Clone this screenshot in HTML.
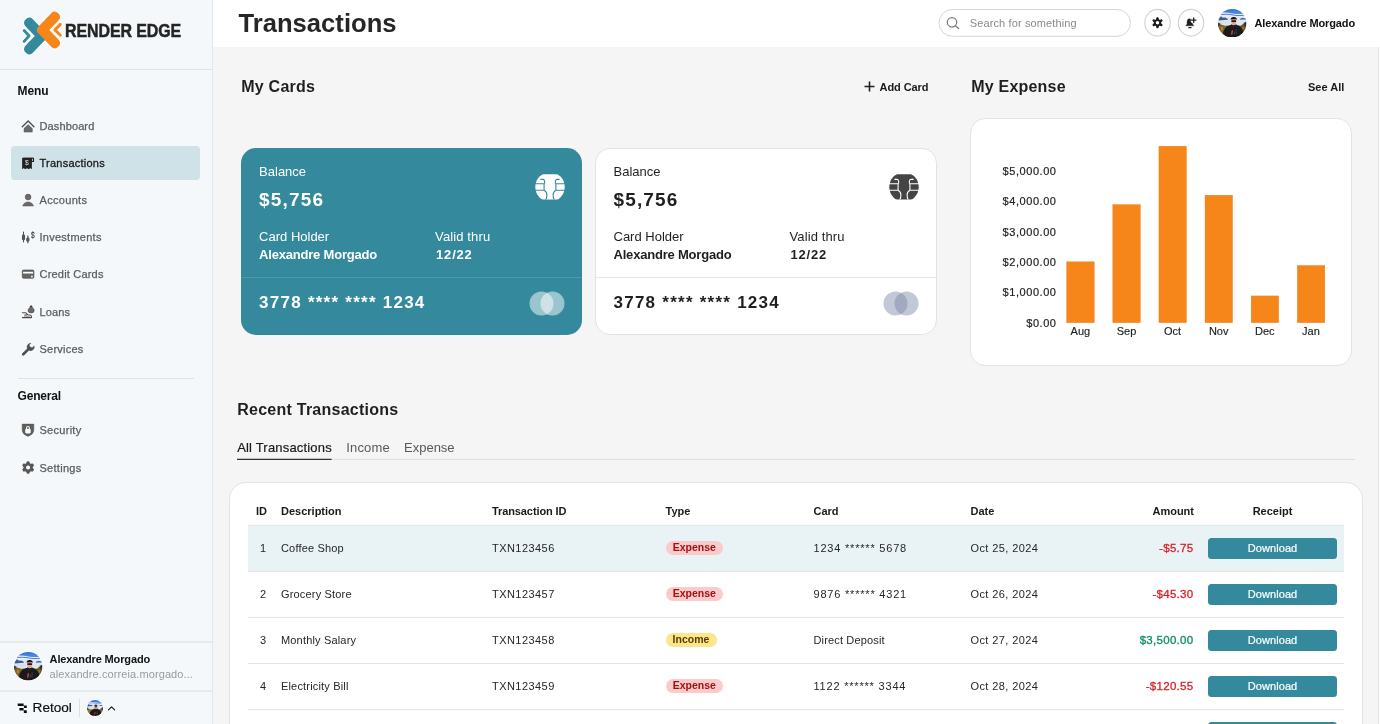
<!DOCTYPE html>
<html lang="en">
<head>
<meta charset="utf-8">
<title>Transactions</title>
<style>
*{box-sizing:border-box;margin:0;padding:0}
html,body{width:1380px;height:724px;overflow:hidden}
body{will-change:transform}
body{font-family:"Liberation Sans",sans-serif;background:#f5f5f5;color:#1f1f1f;position:relative;font-size:11px}
.abs{position:absolute}
.t{position:absolute;white-space:nowrap;line-height:1;transform-origin:0 50%}
.b{font-weight:bold}
/* sidebar */
#side{position:absolute;left:0;top:0;width:213px;height:724px;background:#f5f8fa;border-right:1px solid #e4e6e8}
.hl{position:absolute;height:1px;background:#dfe2e4}
.mi{position:absolute;left:11px;width:189px;height:34px;border-radius:4px}
.mi.sel{background:#cfe2e8}
.mi svg{position:absolute;left:10px;top:10px;width:14px;height:14px;overflow:visible;filter:drop-shadow(0 0 .7px #fff) drop-shadow(0 0 .7px #fff)}
.mi span{position:absolute;left:28.5px;top:12px;line-height:11px;font-size:11px;color:#5c5c5c;white-space:nowrap;-webkit-text-stroke:0.25px #5c5c5c;letter-spacing:0.12px}
.mi.sel span{color:#1a1a1a;-webkit-text-stroke:0.3px #1a1a1a}
/* header */
#head{position:absolute;left:213px;top:0;width:1167px;height:47px;background:#fff}
.circ{position:absolute;width:27px;height:28px;border-radius:50%;border:1px solid #d9d9d9;background:#fff}
</style>
</head>
<body>
<svg width="0" height="0" style="position:absolute">
  <defs>
    <clipPath id="avc"><circle cx="14" cy="14" r="14"/></clipPath>
    <linearGradient id="avsky" x1="0" y1="0" x2="0" y2="1"><stop offset="0" stop-color="#2f6ed8"/><stop offset="1" stop-color="#5c8fe0"/></linearGradient>
    <symbol id="avatar" viewBox="0 0 28 28">
      <g clip-path="url(#avc)">
        <rect width="28" height="28" fill="#dde8f1"/>
        <rect width="28" height="5" fill="url(#avsky)"/>
        <path d="M0 4 Q7 2.9 14 4.4 T28 4.2 V7.6 H0Z" fill="#e6edf6"/>
        <path d="M3 5.5 Q9 4.5 15 5.8 T26 5.9" stroke="#4f83dc" stroke-width="1" fill="none"/>
        <path d="M.5 10.4 L2.8 7.2 L5 8.6 L7.2 8.4 L9.8 9.8 L9.6 10.6 L.5 11.4Z" fill="#42598f"/>
        <path d="M21.6 9.6 L24.2 8.7 L27.6 9.3 V10.4 L21.6 10.5Z" fill="#5a6fa0"/>
        <path d="M0 11.4 Q6 12.4 12 11.4 L12 15 L0 15Z" fill="#cfe0ee" opacity=".6"/>
        <path d="M0 14.4 L3 15.2 L7 16.6 L10 16.2 V28 H0Z" fill="#7d6426"/>
        <path d="M28 13.8 L25 14.6 L22.4 16.6 L20 16.2 V28 H28Z" fill="#6a5628"/>
        <path d="M0 13.2 L2.6 14.6 L.6 17.6 L0 17.4Z" fill="#3c3c3c"/>
        <path d="M28 12.4 L25.2 13.8 L26.4 17.2 L28 17.8Z" fill="#333"/>
        <path d="M2.4 18.6 L4.2 16.9 L5.2 19.8 L3.8 21.8Z" fill="#a88c36"/>
        <path d="M24.4 17.6 L26 18 L25.4 20.4 L24 19.6Z" fill="#8f772f"/>
        <path d="M10.6 16.3 Q13 14.9 15.6 15.7 Q18.3 14.9 20.4 16.5 Q23.8 18.2 25 22.6 L25.8 28 H3.8 L5.4 22 Q7.2 17.6 10.6 16.3Z" fill="#1a1a1c"/>
        <path d="M13.1 10 Q13.1 8.4 15.5 8.4 Q17.9 8.4 17.9 10 V13 Q17.9 15.6 15.5 16.2 Q13.1 15.6 13.1 13Z" fill="#eea090"/>
        <path d="M12.5 10.9 Q12.3 7.9 15.5 7.9 Q18.7 7.9 18.5 10.9 L17.8 10.2 H13.2Z" fill="#121212"/>
        <rect x="13.1" y="11.1" width="4.8" height="1.6" rx=".6" fill="#1a1a1a"/>
        <path d="M13 15 L15.5 16.8 L18 15 L19 17.2 L15.5 19 L12 17.2Z" fill="#202022"/>
        <path d="M13.3 21.4 L14.6 20.4 L14.7 22.4 L14 25.6 L13 25.4Z" fill="#d4483a"/>
        <path d="M17.2 19.6 L18.5 19.6 L18.7 25 L17.3 25Z" fill="#35457a" opacity=".55"/>
        <path d="M15.7 22.2 H16.9 V25 H15.7Z" fill="#4a4a4a" opacity=".8"/>
      </g>
    </symbol>
  </defs>
</svg>

<!-- ============ SIDEBAR ============ -->
<div id="side">
  <!-- LOGO -->
  <svg class="abs" style="left:0;top:0" width="212" height="69" viewBox="0 0 212 69">
    <g stroke-linecap="round" stroke-linejoin="round">
      <path d="M29.48 21.88 L28.32 22.98 L40.70 36.00 L28.32 49.02 L29.48 50.12 L42.90 36.00 Z" fill="#fff" stroke="#fff" stroke-width="10.6"/>
      <path d="M54.62 15.88 L55.78 16.98 L43.40 30.00 L55.78 43.02 L54.62 44.12 L41.20 30.00 Z" fill="#fff" stroke="#fff" stroke-width="10.6"/>
      <path d="M24.1 30.6 L29.1 35.85 L24.1 41.4" fill="none" stroke="#fff" stroke-width="5"/>
      <path d="M60.4 24.4 L54.9 29.9 L60.4 35.2" fill="none" stroke="#fff" stroke-width="5"/>
      <path d="M29.48 21.88 L28.32 22.98 L40.70 36.00 L28.32 49.02 L29.48 50.12 L42.90 36.00 Z" fill="#338a9c" stroke="#338a9c" stroke-width="8.6"/>
      <path d="M24.1 30.6 L29.1 35.85 L24.1 41.4" fill="none" stroke="#338a9c" stroke-width="2.9"/>
      <path d="M54.62 15.88 L55.78 16.98 L43.40 30.00 L55.78 43.02 L54.62 44.12 L41.20 30.00 Z" fill="#f6861a" stroke="#f6861a" stroke-width="8.6"/>
      <path d="M60.4 24.4 L54.9 29.9 L60.4 35.2" fill="none" stroke="#f6861a" stroke-width="2.9"/>
    </g>
  </svg>
  <div class="t b" id="logotxt" style="left:64.5px;top:21px;font-size:19px;color:#242424;letter-spacing:-0.1px;transform:scaleX(0.84);-webkit-text-stroke:.5px #242424">RENDER EDGE</div>
  <div class="hl" style="left:0;top:69px;width:212px"></div>

  <div class="t b" style="left:17.6px;top:85.3px;font-size:12px;color:#111;letter-spacing:-.1px">Menu</div>

  <div class="mi" style="top:108.5px"><svg viewBox="0 0 14 14"><path d="M1.3 7.7 L7.1 2 L12.9 7.8" fill="none" stroke="#4d4d4d" stroke-width="1.35" stroke-linecap="square"/><path d="M7.1 5.6 L11.3 9.6 V13.1 H3.0 V9.6 Z" fill="#6a6a6a" stroke="#4d4d4d" stroke-width=".5" stroke-linejoin="round"/></svg><span>Dashboard</span></div>
  <div class="mi sel" style="top:145.7px"><svg viewBox="0 0 14 14"><path d="M1.1 2.6 Q1.1 1.4 2.3 1.4 H11.9 Q13.1 1.4 13.1 2.6 V5.9 H10.9 V13.2 L9.3 12.3 L7.65 13.2 L6 12.3 L4.35 13.2 L2.7 12.3 L1.1 13.2 Z" fill="#222"/><rect x="11.15" y="2.8" width=".8" height="2.1" fill="#dfeaee"/><text x="5.85" y="9.35" font-family="Liberation Sans, sans-serif" font-size="6.6" fill="#dfe8ec" text-anchor="middle">$</text></svg><span style="letter-spacing:0.24px">Transactions</span></div>
  <div class="mi" style="top:182.9px"><svg viewBox="0 0 14 14"><circle cx="7.1" cy="4.05" r="2.95" fill="#6a6a6a" stroke="#505050" stroke-width=".5"/><path d="M1.7 13 C2.6 10.2 4.4 8.95 7.1 8.95 C9.8 8.95 11.6 10.2 12.5 13 Z" fill="#6a6a6a" stroke="#4d4d4d" stroke-width=".5" stroke-linejoin="round"/></svg><span style="letter-spacing:0.32px">Accounts</span></div>
  <div class="mi" style="top:220.1px"><svg viewBox="0 0 14 14"><path d="M2.5 2V12" stroke="#4d4d4d" stroke-width="1" stroke-linecap="round" fill="none"/><path d="M6.85 5.6V13.2" stroke="#707070" stroke-width="1.5" fill="none"/><path d="M.95 5.3 Q2.5 3.2 4.05 5.3 V9.4 Q2.5 11.5 .95 9.4Z" fill="#555"/><path d="M5.2 8.3 Q6.85 6.6 8.5 8.3 V10.8 Q6.85 12.5 5.2 10.8Z" fill="#5a5a5a"/><text transform="translate(11.8 8.3) scale(.78 1)" font-family="Liberation Sans, sans-serif" font-size="8.4" fill="#333" stroke="#333" stroke-width=".15" text-anchor="middle">$</text></svg><span style="letter-spacing:0.26px">Investments</span></div>
  <div class="mi" style="top:257.3px"><svg viewBox="0 0 14 14"><rect x="1.3" y="3" width="11.6" height="8.2" rx="1.3" fill="#666" stroke="#4a4a4a" stroke-width=".7"/><rect x="2.1" y="4.8" width="10" height="1.7" fill="#fff"/><rect x="10.1" y="8.8" width="1.6" height="1.6" fill="#fff"/></svg><span style="letter-spacing:0.20px">Credit Cards</span></div>
  <div class="mi" style="top:294.5px"><svg viewBox="0 0 14 14"><g transform="translate(0,-.6)"><path d="M9.2 1.5 H11 L11.1 3.1 Q13.2 4.2 13.2 6 Q13.2 8.5 10.1 8.5 Q7 8.5 7 6 Q7 4.2 9.1 3.1 Z" fill="#6a6a6a" stroke="#4a4a4a" stroke-width=".7" stroke-linejoin="round"/><path d="M9.1 2.1 H11.1" stroke="#3a3a3a" stroke-width="1.2"/></g><path d="M1.4 7.8 H4.3 Q5.3 7.8 5.8 8.7 Q6.2 9.5 7 9.7 L9.3 10 Q10.5 10.4 10.6 12.6 H1.4 M3.6 9.95 H5.7" fill="none" stroke="#4a4a4a" stroke-width="1.05" stroke-linecap="round" stroke-linejoin="round"/><path d="M3.2 11.2 H9" stroke="#999" stroke-width="1.2"/></svg><span>Loans</span></div>
  <div class="mi" style="top:331.7px"><svg viewBox="0 0 14 14"><path d="M2.3 12.2 L8 6.6" stroke="#505050" stroke-width="2.7" stroke-linecap="round" fill="none"/><path d="M11.5 1.7 A3.7 3.7 0 1 0 13.3 5.6 L10.6 6.2 L8.9 4.4 L9.4 2.1 Z" fill="#505050" stroke="#505050" stroke-width=".4" stroke-linejoin="round" transform="rotate(-24 9.8 4.9)"/></svg><span style="letter-spacing:0.22px">Services</span></div>

  <div class="hl" style="left:17.5px;top:378px;width:176.5px"></div>
  <div class="t b" style="left:17.6px;top:390.3px;font-size:12px;color:#111;letter-spacing:-.22px">General</div>
  <div class="mi" style="top:413.3px"><svg viewBox="0 0 14 14"><path d="M1.2 1.1 H12.8 V7.4 Q12.6 11.3 6.95 13.4 Q1.4 11.3 1.2 7.4 Z" fill="#5f5f5f" stroke="#4a4a4a" stroke-width=".5" stroke-linejoin="round"/><path d="M5 6.3 V5 A1.95 2.1 0 0 1 8.9 5 V6.3 H9.7 V9.3 Q9.7 10.4 8.6 10.4 H5.3 Q4.2 10.4 4.2 9.3 V6.3 Z" fill="#fff"/><ellipse cx="6.95" cy="5.05" rx="1" ry=".75" fill="#1f1f1f"/></svg><span style="letter-spacing:0.28px">Security</span></div>
  <div class="mi" style="top:450.5px"><svg viewBox="0 0 14 14"><path fill-rule="evenodd" d="M6.43 0.94 L7.77 0.94 L8.70 2.94 L9.38 3.33 L11.58 3.14 L12.25 4.30 L10.98 6.11 L10.98 6.89 L12.25 8.70 L11.58 9.86 L9.38 9.67 L8.70 10.06 L7.77 12.06 L6.43 12.06 L5.50 10.06 L4.82 9.67 L2.62 9.86 L1.95 8.70 L3.22 6.89 L3.22 6.11 L1.95 4.30 L2.62 3.14 L4.82 3.33 L5.50 2.94Z M4.40 6.50 a2.70 2.70 0 1 0 5.40 0 a2.70 2.70 0 1 0 -5.40 0Z" fill="#555" stroke="#555" stroke-width="1.3" stroke-linejoin="round"/></svg><span style="letter-spacing:0.28px">Settings</span></div>

  <div class="hl" style="left:0;top:641px;width:212px;height:2px;background:#e7eaec"></div>
  <svg class="abs" style="left:12.8px;top:651.1px" width="30.4" height="30.4"><circle cx="15.2" cy="15.2" r="15.2" fill="#fff"/><use href="#avatar" x="1" y="1" width="28.4" height="28.4"/></svg>
  <div class="t b" style="left:49.6px;top:654px;font-size:11px;color:#111;letter-spacing:-.13px">Alexandre Morgado</div>
  <div class="t" style="left:49.6px;top:668.8px;font-size:11px;color:#9a9a9a;letter-spacing:.1px">alexandre.correia.morgado...</div>
  <div class="hl" style="left:0;top:690px;width:212px;height:2px;background:#e7eaec"></div>
  <svg class="abs" style="left:17px;top:703.1px;filter:drop-shadow(0 0 .8px #fff)" width="11" height="11" viewBox="0 0 11 11"><path d="M.7 .4 H6.6 V2.6 H9.8 V4.9 H6.9 V2.95 H.7Z M2.4 5.1 H6.6 V7.3 H9.8 V10.1 H6.8 V7.55 H2.4Z" fill="#0f0f0f"/></svg>
  <div class="t" style="left:32.6px;top:700.6px;font-size:13.6px;color:#111;-webkit-text-stroke:.2px #111">Retool</div>
  <svg class="abs" style="left:86px;top:699.2px" width="18" height="18"><circle cx="9" cy="9" r="9" fill="#fff"/><use href="#avatar" x="1" y="1" width="16" height="16"/></svg>
  <svg class="abs" style="left:107px;top:704px" width="9" height="8" viewBox="0 0 9 8"><path d="M1.5 5.9 L4.55 2.9 L7.6 5.9" fill="none" stroke="#222" stroke-width="1.3" stroke-linecap="round" stroke-linejoin="round"/></svg>
  <div class="abs" style="left:79px;top:699px;width:1px;height:18px;background:#dcdfe1"></div>
</div>

<!-- ============ HEADER ============ -->
<div id="head">
  <div class="t b" style="left:25.4px;top:10.7px;font-size:25.6px;color:#262626;letter-spacing:.03px">Transactions</div>
  <svg class="abs" style="left:725px;top:8px" width="194" height="30" viewBox="0 0 194 30"><rect x="1" y="1.5" width="191.5" height="26.8" rx="13.4" fill="#fff" stroke="#d6d6d6" stroke-width="1"/><circle cx="14" cy="14.3" r="4.7" fill="none" stroke="#7c7c7c" stroke-width="1.25"/><path d="M17.4 17.8 L20.6 20.5" stroke="#7c7c7c" stroke-width="1.3" stroke-linecap="round"/></svg>
  <div class="t" style="left:756.7px;top:17.7px;font-size:11px;color:#8a8a8a;letter-spacing:.13px">Search for something</div>
  <svg class="abs" style="left:927px;top:5px" width="70" height="35" viewBox="0 0 70 35"><ellipse cx="17.5" cy="17.75" rx="12.7" ry="13.4" fill="#fff" stroke="#d2d2d2" stroke-width="1.1"/><ellipse cx="51" cy="17.75" rx="12.7" ry="13.4" fill="#fff" stroke="#d2d2d2" stroke-width="1.1"/><path fill-rule="evenodd" d="M17.00 12.77 L18.00 12.77 L18.44 14.74 L19.63 15.43 L21.56 14.83 L22.06 15.69 L20.57 17.06 L20.57 18.44 L22.06 19.81 L21.56 20.67 L19.63 20.07 L18.44 20.76 L18.00 22.73 L17.00 22.73 L16.56 20.76 L15.37 20.07 L13.44 20.67 L12.94 19.81 L14.43 18.44 L14.43 17.06 L12.94 15.69 L13.44 14.83 L15.37 15.43 L16.56 14.74Z M15.20 17.75 a2.30 2.30 0 1 0 4.60 0 a2.30 2.30 0 1 0 -4.60 0Z" fill="#1a1a1a" stroke="#1a1a1a" stroke-width="1.1" stroke-linejoin="round"/><g transform="translate(36.9,3.7)"><path d="M8.9 17.1 L10.2 15.3 V12.9 Q10.3 10.2 12.2 10 Q13.2 9.95 13.9 10.5 Q13 12.6 14.2 13.9 Q14.9 14.6 15.6 14.7 L15.7 15.4 L16.8 17.1 Z" fill="#1f1f1f" stroke="#1f1f1f" stroke-width=".4" stroke-linejoin="round"/><path d="M12 18.95 H14.1" stroke="#1f1f1f" stroke-width="1.25" stroke-linecap="round"/><path d="M16.8 9.3 V13.7 M14.6 11.5 H19" stroke="#1f1f1f" stroke-width="1.3" stroke-linecap="round"/></g></svg>
  <svg class="abs" style="left:1005.3px;top:8.6px" width="28.4" height="28.4"><use href="#avatar" width="28.4" height="28.4"/></svg>
  <div class="t b" style="left:1041.5px;top:17.5px;font-size:11px;color:#111;letter-spacing:-.13px">Alexandre Morgado</div>
</div>


<style>
.card{position:absolute;top:148.2px;width:341.8px;height:186.6px;border-radius:15px}
.card .t{left:18.5px}
.c1{left:240.6px;background:#348a9c;color:#fff}
.c2{left:595px;background:#fff;color:#1f1f1f;border:1px solid #e2e2e2}
.c2 .t{left:17.5px}
.card .div{position:absolute;left:0;right:0;top:128.5px;height:1px}
.c1 .div{background:#4a9aaa}
.c2 .div{background:#e6e6e6;top:127.5px}
.sec{font-size:16px;font-weight:bold;color:#1f1f1f}
#tbl{position:absolute;left:229px;top:482px;width:1134px;height:260px;background:#fff;border:1px solid #e2e2e2;border-radius:17px}
.th{position:absolute;top:505.5px;font-size:11px;font-weight:bold;line-height:11px;color:#1a1a1a;white-space:nowrap}
.row{position:absolute;left:248px;width:1096px;height:46px}
.row div{position:absolute;top:17.4px;font-size:11px;line-height:11px;color:#262626;white-space:nowrap}
.row .tag{top:15.8px;height:13.7px;border-radius:7px;line-height:13.7px;font-weight:bold;font-size:10.5px;text-align:center;left:417.5px}
.tag.ex{background:#fbcaca;color:#a31212;width:57.5px}
.tag.in{background:#fde58a;color:#5a3a06;width:51px}
.row .btn{left:960px;top:12.3px;width:129px;height:21.1px;border-radius:3.5px;background:#348a9c;color:#fff;text-align:center;line-height:21.3px;font-size:11px;letter-spacing:0.08px;-webkit-text-stroke:.2px #fff}
.row .amt{right:150.5px;text-align:right;font-size:11.5px;letter-spacing:0.3px}
.neg{color:#d81f26 !important;-webkit-text-stroke:.3px #d81f26}.pos{color:#0a8f60 !important;-webkit-text-stroke:.3px #0a8f60}
.yl{position:absolute;right:323.5px;font-size:11px;line-height:11px;letter-spacing:0.55px;color:#1f1f1f;white-space:nowrap;-webkit-text-stroke:.2px #1f1f1f}
.xl{position:absolute;top:325.6px;width:40px;text-align:center;font-size:11px;line-height:11px;color:#1f1f1f;-webkit-text-stroke:.15px #1f1f1f}
.bar{position:absolute;width:27.5px;background:#f6861a}
</style>

<!-- My Cards -->
<div class="t sec" style="left:241.2px;top:78.5px;letter-spacing:.25px">My Cards</div>
<svg class="abs" style="left:862.6px;top:80.3px" width="13" height="13" viewBox="0 0 13 13"><path d="M6.5 1.5V11.5M1.5 6.5H11.5" stroke="#222" stroke-width="1.6" fill="none"/></svg>
<div class="t b" style="left:879.6px;top:81.5px;font-size:11px;color:#1a1a1a;letter-spacing:-.08px">Add Card</div>

<div class="card c1">
  <svg class="abs" style="left:294.1px;top:26.1px" width="30" height="26" viewBox="0 0 30 26"><defs><clipPath id="cpffffff"><rect x="0" y="0.3" width="30" height="25.3"/></clipPath></defs><g clip-path="url(#cpffffff)"><circle cx="15" cy="13" r="14.7" fill="#ffffff"/><g fill="none" stroke="#348a9c" stroke-width="1.1"><path d="M0 9.7 H9.1 V16.3 H0"/><path d="M5.4 5.4 H8 Q9.6 5.5 9.6 7.2 V9.7"/><path d="M9.1 16.3 Q11.9 17.8 11.9 21 Q11.9 23.5 10.8 26"/><path d="M30 9.7 H20.9 V16.3 H30"/><path d="M24.6 5.4 H22 Q20.4 5.5 20.4 7.2 V9.7"/><path d="M20.9 16.3 Q18.1 17.8 18.1 21 Q18.1 23.5 19.2 26"/></g></g></svg>
  <div class="t" style="top:16.5px;font-size:13px">Balance</div>
  <div class="t b" style="top:41.8px;font-size:19px;letter-spacing:1.15px">$5,756</div>
  <div class="t" style="top:81.5px;font-size:13px">Card Holder</div>
  <div class="t b" style="top:100px;font-size:13px;letter-spacing:-0.2px">Alexandre Morgado</div>
  <div class="t" style="left:194.5px;top:81.5px;font-size:13px;letter-spacing:.12px">Valid thru</div>
  <div class="t b" style="left:195.5px;top:100px;font-size:13px;letter-spacing:0.8px">12/22</div>
  <div class="div"></div>
  <div class="t b" style="top:146.3px;font-size:17px;letter-spacing:1.25px">3778 **** **** 1234</div>
  <svg class="abs" style="left:288px;top:142.5px" width="36" height="25" viewBox="0 0 36 25"><circle cx="12.5" cy="12.5" r="12" fill="#fff" fill-opacity=".5"/><circle cx="23.5" cy="12.5" r="12" fill="#fff" fill-opacity=".5"/></svg>
</div>

<div class="card c2">
  <svg class="abs" style="left:293.1px;top:25.1px" width="30" height="26" viewBox="0 0 30 26"><defs><clipPath id="cp444444"><rect x="0" y="0.3" width="30" height="25.3"/></clipPath></defs><g clip-path="url(#cp444444)"><circle cx="15" cy="13" r="14.7" fill="#444444"/><g fill="none" stroke="#ffffff" stroke-width="1.1"><path d="M0 9.7 H9.1 V16.3 H0"/><path d="M5.4 5.4 H8 Q9.6 5.5 9.6 7.2 V9.7"/><path d="M9.1 16.3 Q11.9 17.8 11.9 21 Q11.9 23.5 10.8 26"/><path d="M30 9.7 H20.9 V16.3 H30"/><path d="M24.6 5.4 H22 Q20.4 5.5 20.4 7.2 V9.7"/><path d="M20.9 16.3 Q18.1 17.8 18.1 21 Q18.1 23.5 19.2 26"/></g></g></svg>
  <div class="t" style="top:15.5px;font-size:13px">Balance</div>
  <div class="t b" style="top:40.8px;font-size:19px;letter-spacing:1.15px">$5,756</div>
  <div class="t" style="top:80.5px;font-size:13px">Card Holder</div>
  <div class="t b" style="top:99px;font-size:13px;letter-spacing:-0.2px">Alexandre Morgado</div>
  <div class="t" style="left:193.5px;top:80.5px;font-size:13px;letter-spacing:.12px">Valid thru</div>
  <div class="t b" style="left:194.5px;top:99px;font-size:13px;letter-spacing:0.8px">12/22</div>
  <div class="div"></div>
  <div class="t b" style="top:145.3px;font-size:17px;letter-spacing:1.25px">3778 **** **** 1234</div>
  <svg class="abs" style="left:287px;top:141.5px" width="36" height="25" viewBox="0 0 36 25"><circle cx="12.5" cy="12.5" r="12" fill="#7b86a8" fill-opacity=".45"/><circle cx="23.5" cy="12.5" r="12" fill="#7b86a8" fill-opacity=".45"/></svg>
</div>

<!-- My Expense -->
<div class="t sec" style="left:971.3px;top:78.5px;letter-spacing:.2px">My Expense</div>
<div class="t b" style="left:1308px;top:81.5px;font-size:11px;color:#1a1a1a">See All</div>
<div class="abs" id="chart" style="left:970px;top:118px;width:382px;height:248px;background:#fff;border:1px solid #e2e2e2;border-radius:15px"></div>
<div class="abs" style="left:0;top:0;width:1380px;height:0">
  <div class="yl" style="top:165.6px">$5,000.00</div>
  <div class="yl" style="top:196.1px">$4,000.00</div>
  <div class="yl" style="top:226.6px">$3,000.00</div>
  <div class="yl" style="top:257.1px">$2,000.00</div>
  <div class="yl" style="top:287.1px">$1,000.00</div>
  <div class="yl" style="top:317.6px">$0.00</div>
  <svg class="abs" style="left:1060px;top:140px" width="280" height="190" viewBox="0 0 280 190"><g fill="#f6861a" stroke="#ee7d12" stroke-width=".4"><rect x="6.70" y="121.84" width="27.50" height="60.86"/><rect x="52.82" y="64.63" width="27.50" height="118.07"/><rect x="98.94" y="6.21" width="27.50" height="176.49"/><rect x="145.06" y="55.20" width="27.50" height="127.50"/><rect x="191.18" y="155.92" width="27.50" height="26.78"/><rect x="237.30" y="125.49" width="27.50" height="57.21"/></g></svg>
  <div class="xl" style="left:1060.4px">Aug</div>
  <div class="xl" style="left:1106.5px">Sep</div>
  <div class="xl" style="left:1152.6px">Oct</div>
  <div class="xl" style="left:1198.7px">Nov</div>
  <div class="xl" style="left:1244.8px">Dec</div>
  <div class="xl" style="left:1290.9px">Jan</div>
</div>

<!-- Recent Transactions -->
<div class="t sec" style="left:237.2px;top:401.6px;letter-spacing:.25px">Recent Transactions</div>
<div class="t" style="left:237.2px;top:440.5px;font-size:13px;color:#1a1a1a;letter-spacing:.18px;-webkit-text-stroke:.2px #1a1a1a">All Transactions</div>
<div class="t" style="left:346.3px;top:440.5px;font-size:13px;color:#595959;letter-spacing:.15px">Income</div>
<div class="t" style="left:404px;top:440.5px;font-size:13px;color:#595959">Expense</div>
<svg class="abs" style="left:237px;top:455px" width="1120" height="8" viewBox="0 0 1120 8"><path d="M0 4.4 H1118" stroke="#dedede" stroke-width="1"/><path d="M0 4.35 H94.6" stroke="#333" stroke-width="1.3"/></svg>


<div id="tbl"></div>
<div class="th" style="left:256px">ID</div>
<div class="th" style="left:281px">Description</div>
<div class="th" style="left:492px;letter-spacing:-.1px">Transaction ID</div>
<div class="th" style="left:665.5px">Type</div>
<div class="th" style="left:813.5px">Card</div>
<div class="th" style="left:970.5px">Date</div>
<div class="th" style="right:186px">Amount</div>
<div class="th" style="left:1242.5px;width:60px;text-align:center">Receipt</div>
<svg class="abs" style="left:248px;top:520px" width="1096" height="204" viewBox="0 0 1096 204"><rect x="0" y="5.3" width="1096" height="46.08" fill="#e9f3f6"/><g stroke="#e1e3e4" stroke-width="1" fill="none"><path d="M0 5.30 H1096"/><path d="M0 51.38 H1096"/><path d="M0 97.46 H1096"/><path d="M0 143.54 H1096"/><path d="M0 189.62 H1096"/></g></svg>

<div class="row" style="top:525.3px;background:none">
  <div style="left:12px">1</div><div style="left:33px;letter-spacing:.17px">Coffee Shop</div><div style="left:244px;letter-spacing:.45px">TXN123456</div>
  <div class="tag ex">Expense</div><div style="left:565.5px;letter-spacing:.8px">1234 ****** 5678</div><div style="left:722.5px;letter-spacing:.4px">Oct 25, 2024</div>
  <div class="amt neg">-$5.75</div><div class="btn">Download</div>
</div>
<div class="row" style="top:571.4px">
  <div style="left:12px">2</div><div style="left:33px;letter-spacing:.17px">Grocery Store</div><div style="left:244px;letter-spacing:.45px">TXN123457</div>
  <div class="tag ex">Expense</div><div style="left:565.5px;letter-spacing:.8px">9876 ****** 4321</div><div style="left:722.5px;letter-spacing:.4px">Oct 26, 2024</div>
  <div class="amt neg">-$45.30</div><div class="btn">Download</div>
</div>
<div class="row" style="top:617.5px">
  <div style="left:12px">3</div><div style="left:33px;letter-spacing:.17px">Monthly Salary</div><div style="left:244px;letter-spacing:.45px">TXN123458</div>
  <div class="tag in">Income</div><div style="left:565.5px;letter-spacing:.15px">Direct Deposit</div><div style="left:722.5px;letter-spacing:.4px">Oct 27, 2024</div>
  <div class="amt pos">$3,500.00</div><div class="btn">Download</div>
</div>
<div class="row" style="top:663.5px">
  <div style="left:12px">4</div><div style="left:33px;letter-spacing:.17px">Electricity Bill</div><div style="left:244px;letter-spacing:.45px">TXN123459</div>
  <div class="tag ex">Expense</div><div style="left:565.5px;letter-spacing:.8px">1122 ****** 3344</div><div style="left:722.5px;letter-spacing:.4px">Oct 28, 2024</div>
  <div class="amt neg">-$120.55</div><div class="btn">Download</div>
</div>
<div class="row" style="top:709.6px">
  <div class="btn">Download</div>
</div>

<div class="abs" style="left:1378px;top:47px;width:2px;height:677px;background:#fafafa;border-left:1px solid #e6e6e6"></div>


</body>
</html>
